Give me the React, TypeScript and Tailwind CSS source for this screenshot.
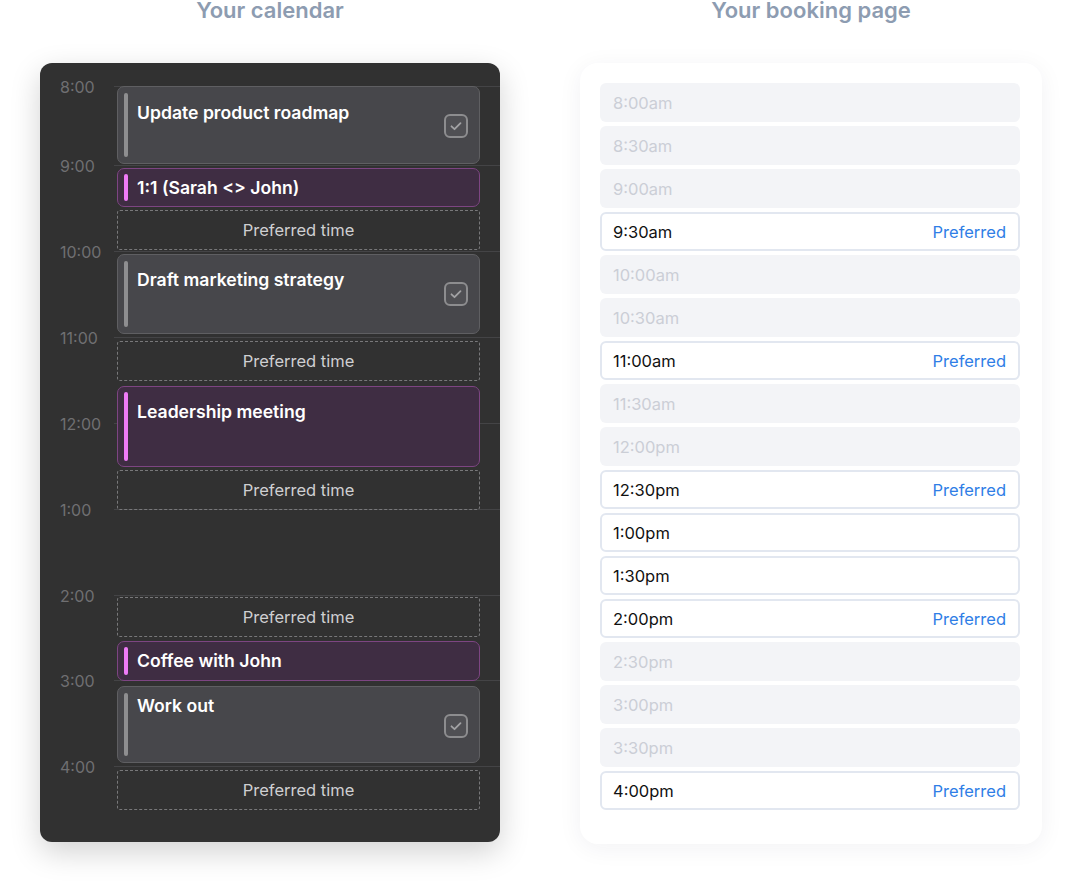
import React from 'react';

const hours = [
  { label: '8:00', h: 'h-[79px]' },
  { label: '9:00', h: 'h-[86px]' },
  { label: '10:00', h: 'h-[86px]' },
  { label: '11:00', h: 'h-[86px]' },
  { label: '12:00', h: 'h-[86px]' },
  { label: '1:00', h: 'h-[86px]' },
  { label: '2:00', h: 'h-[85px]' },
  { label: '3:00', h: 'h-[86px]' },
  { label: '4:00', h: 'h-[53px]' },
];

type Slot = { time: string; open?: boolean; preferred?: boolean };

const slots: Slot[] = [
  { time: '8:00am' },
  { time: '8:30am' },
  { time: '9:00am' },
  { time: '9:30am', open: true, preferred: true },
  { time: '10:00am' },
  { time: '10:30am' },
  { time: '11:00am', open: true, preferred: true },
  { time: '11:30am' },
  { time: '12:00pm' },
  { time: '12:30pm', open: true, preferred: true },
  { time: '1:00pm', open: true },
  { time: '1:30pm', open: true },
  { time: '2:00pm', open: true, preferred: true },
  { time: '2:30pm' },
  { time: '3:00pm' },
  { time: '3:30pm' },
  { time: '4:00pm', open: true, preferred: true },
];

function CheckBox() {
  return (
    <svg width="24" height="24" viewBox="0 0 24 24" fill="none">
      <rect x="1" y="1" width="22" height="22" rx="5" stroke="#8d8d8f" strokeWidth="2" fill="#505054" />
      <path d="M7.5 12.3l3 2.9 6-6" stroke="#a2a2a4" strokeWidth="1.8" strokeLinecap="round" strokeLinejoin="round" />
    </svg>
  );
}

function Task({ title, className, pad = 'pt-[16px]' }: { title: string; className: string; pad?: string }) {
  return (
    <div className={`flex rounded-[7px] border border-[#5f5f62] bg-[#47474b] ${className}`}>
      <div className="my-[6px] ml-[6px] w-[4px] rounded-full bg-[#8e8e90]" />
      <div className="flex flex-1 justify-between pl-[9px] pr-[11px]">
        <div className={`${pad} text-[17.6px] font-semibold leading-5 text-white`}>{title}</div>
        <div className="mt-[27px]">
          <CheckBox />
        </div>
      </div>
    </div>
  );
}

function Meeting({ title, tall, className }: { title: string; tall?: boolean; className: string }) {
  return (
    <div className={`flex rounded-[7px] border border-[#7d4582] bg-[#3f2d43] ${className}`}>
      <div className="my-[5px] ml-[6px] w-[4px] rounded-full bg-[#ef7bf7]" />
      <div className={`flex flex-1 pl-[9px] ${tall ? 'items-start pt-[15px]' : 'items-center'}`}>
        <div className="text-[17.6px] font-semibold leading-5 text-white">{title}</div>
      </div>
    </div>
  );
}

function Preferred({ className }: { className: string }) {
  return (
    <div
      className={`flex h-[40px] items-center justify-center rounded-[3px] border-[1.5px] border-dashed border-[#78787a] text-[16.5px] text-[#cfcfd1] ${className}`}
    >
      Preferred time
    </div>
  );
}

function Calendar() {
  return (
    <div className="relative h-[779px] w-[460px] overflow-hidden rounded-[12px] bg-[#313131] shadow-[0_10px_30px_rgba(0,0,0,0.18)]">
      <div className="pt-[23px]">
        {hours.map((h) => (
          <div key={h.label} className={`flex ${h.h}`}>
            <div className="w-[74px] shrink-0 pl-[20px]">
              <div className="-mt-[9px] text-[16px] leading-5 text-[#6f6f71]">{h.label}</div>
            </div>
            <div className="flex-1 border-t border-[#444446]" />
          </div>
        ))}
      </div>
      <div className="absolute inset-y-0 left-[77px] right-[20px] flex flex-col pt-[23px]">
        <Task title="Update product roadmap" className="h-[78px]" />
        <Meeting title="1:1 (Sarah <> John)" className="mt-[4px] h-[39px]" />
        <Preferred className="mt-[3px]" />
        <Task title="Draft marketing strategy" className="mt-[4px] h-[80px]" pad="pt-[15px]" />
        <Preferred className="mt-[7px]" />
        <Meeting title="Leadership meeting" tall className="mt-[5px] h-[81px]" />
        <Preferred className="mt-[3px]" />
        <Preferred className="mt-[87px]" />
        <Meeting title="Coffee with John" className="mt-[4px] h-[40px]" />
        <Task title="Work out" className="mt-[5px] h-[77px]" pad="pt-[9px]" />
        <Preferred className="mt-[7px]" />
      </div>
    </div>
  );
}

function Booking() {
  return (
    <div className="h-[781px] w-[462px] rounded-[18px] bg-white px-[20px] pt-[20px] shadow-[0_4px_24px_rgba(30,40,60,0.06)]">
      <div className="flex flex-col gap-[4px] pr-[2px]">
        {slots.map((s) =>
          s.open ? (
            <div
              key={s.time}
              className="flex h-[39px] items-center justify-between rounded-[6px] border-2 border-[#e2e7f0] bg-white pl-[11px] pr-[12px] pt-[1px] text-[16.5px]"
            >
              <span className="text-[#111]">{s.time}</span>
              {s.preferred && <span className="text-[#2f7ee6]">Preferred</span>}
            </div>
          ) : (
            <div
              key={s.time}
              className="flex h-[39px] items-center rounded-[6px] bg-[#f3f4f7] pl-[13px] pt-[1px] text-[16.5px] text-[#cbced6]"
            >
              {s.time}
            </div>
          )
        )}
      </div>
    </div>
  );
}

export default function App() {
  return (
    <div className="min-h-[889px] w-[1080px] overflow-hidden bg-white font-['Inter',sans-serif]">
      <div className="flex gap-[80px] pl-[40px]">
        <div className="flex w-[460px] flex-col items-center">
          <h2 className="-mt-[4px] h-[67px] text-[22px] font-semibold leading-7 text-[#8d9cb1]">Your calendar</h2>
          <Calendar />
        </div>
        <div className="flex w-[462px] flex-col items-center">
          <h2 className="-mt-[4px] h-[67px] text-[22px] font-semibold leading-7 text-[#8d9cb1]">Your booking page</h2>
          <Booking />
        </div>
      </div>
    </div>
  );
}
